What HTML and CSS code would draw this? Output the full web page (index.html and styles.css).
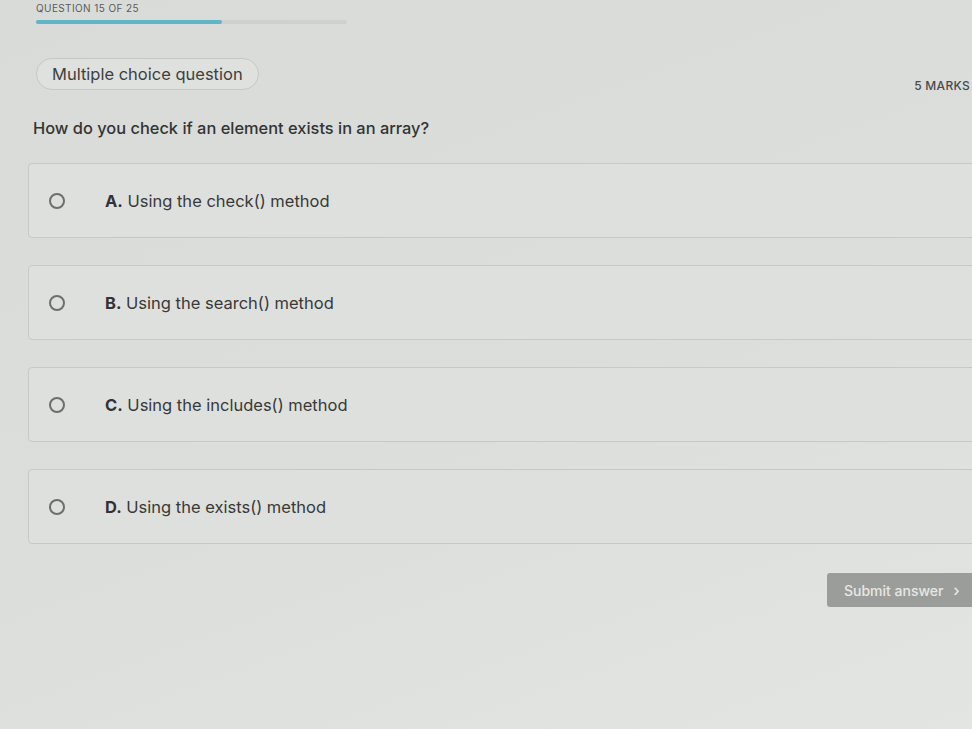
FILE: index.html
```html
<!DOCTYPE html>
<html lang="en">
<head>
<meta charset="utf-8">
<title>Question 15 of 25</title>
<link rel="stylesheet" href="styles.css">
</head>
<body>
<div class="page">
  <div class="qnum">QUESTION 15 OF 25</div>
  <div class="progress"><div class="progress-fill"></div></div>
  <div class="meta">
    <span class="pill">Multiple choice question</span>
    <span class="marks">5 MARKS</span>
  </div>
  <div class="question">How do you check if an element exists in an array?</div>
  <div class="options">
    <label class="option"><span class="radio"></span><span class="opt-text"><b>A.</b> Using the check() method</span></label>
    <label class="option"><span class="radio"></span><span class="opt-text"><b>B.</b> Using the search() method</span></label>
    <label class="option"><span class="radio"></span><span class="opt-text"><b>C.</b> Using the includes() method</span></label>
    <label class="option"><span class="radio"></span><span class="opt-text"><b>D.</b> Using the exists() method</span></label>
  </div>
  <div class="actions">
    <button class="submit">Submit answer <span class="chev">&#x203A;</span></button>
  </div>
</div>
</body>
</html>
```
FILE: styles.css
```css
html, body {
  margin: 0;
  padding: 0;
  height: 100%;
  overflow: hidden;
}
body {
  background: linear-gradient(160deg, #d9dbd8 0%, #dcdedb 55%, #e3e5e2 100%);
  font-family: Inter, "Noto Sans", sans-serif;
  color: #3a3b3a;
}
.page {
  width: 958px;
  padding-left: 28px;
  padding-top: 2px;
}
.qnum {
  height: 12px;
  line-height: 12px;
  font-size: 10px;
  letter-spacing: 0.4px;
  color: #5a5c5a;
  padding-left: 8px;
}
.progress {
  margin-top: 6px;
  margin-left: 8px;
  width: 311px;
  height: 4px;
  border-radius: 2px;
  background: #cfd1ce;
}
.progress-fill {
  width: 186px;
  height: 100%;
  border-radius: 2px;
  background: #5fb6c6;
}
.meta {
  margin-top: 34px;
  display: flex;
  justify-content: space-between;
  align-items: flex-start;
}
.pill {
  margin-left: 8px;
  height: 30px;
  line-height: 30px;
  padding: 0 15px;
  border: 1px solid #c6c8c5;
  border-radius: 16px;
  font-size: 16.5px;
  color: #3e3f3e;
  background: #dfe1de;
}
.marks {
  margin-top: 20px;
  font-size: 12px;
  font-weight: 500;
  letter-spacing: 0.3px;
  color: #4a4b4a;
  margin-right: 16px;
}
.question {
  margin-top: 25px;
  padding-left: 5px;
  font-size: 16.4px;
  font-weight: 500;
  color: #333433;
  line-height: 20px;
}
.options {
  margin-top: 25px;
  display: flex;
  flex-direction: column;
  gap: 27px;
}
.option {
  height: 75px;
  display: flex;
  align-items: center;
  border: 1px solid #c7c9c6;
  border-radius: 4px;
  background: #dee0dd;
  padding-left: 20px;
  box-sizing: border-box;
}
.radio {
  width: 12px;
  height: 12px;
  border: 2px solid #6d6e6d;
  border-radius: 50%;
  flex-shrink: 0;
}
.opt-text {
  margin-left: 40px;
  font-size: 16.5px;
  color: #383938;
}
.opt-text b {
  font-weight: 700;
  color: #333;
}
.actions {
  margin-top: 29px;
  display: flex;
  justify-content: flex-end;
}
.submit {
  width: 159px;
  height: 34px;
  border: none;
  border-radius: 3px;
  background: #9b9d9a;
  color: #e6e8e5;
  font-family: Inter, "Noto Sans", sans-serif;
  font-size: 14px;
  font-weight: 500;
  text-align: left;
  padding-left: 17px;
}
.chev {
  margin-left: 6px;
  font-size: 16px;
}
```
